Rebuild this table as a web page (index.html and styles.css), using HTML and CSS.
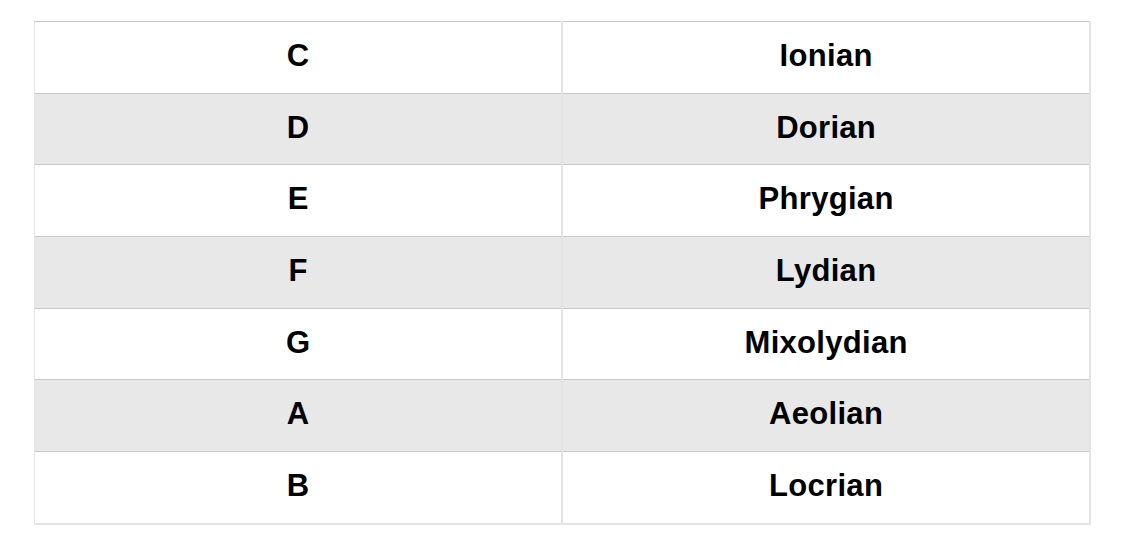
FILE: index.html
```html
<!DOCTYPE html>
<html>
<head>
<meta charset="utf-8">
<link rel="stylesheet" href="styles.css">
</head>
<body>
<div class="wrap">
<table class="modes">
<tbody>
<tr><td>C</td><td>Ionian</td></tr>
<tr><td>D</td><td>Dorian</td></tr>
<tr><td>E</td><td>Phrygian</td></tr>
<tr><td>F</td><td>Lydian</td></tr>
<tr><td>G</td><td>Mixolydian</td></tr>
<tr><td>A</td><td>Aeolian</td></tr>
<tr><td>B</td><td>Locrian</td></tr>
</tbody>
</table>
</div>
</body>
</html>
```
FILE: styles.css
```css
html, body {
  margin: 0;
  padding: 0;
  background: #ffffff;
}
.wrap {
  padding: 21px 33px 0 34px;
}
.modes {
  width: 1057px;
  border-collapse: collapse;
  font-family: "Liberation Sans", Arial, sans-serif;
  font-weight: bold;
  font-size: 31px;
  letter-spacing: 0.3px;
  color: #000;
}
.modes td {
  height: 67.7px;
  padding: 0 0 3px 0;
  text-align: center;
  vertical-align: middle;
  border-left: 2px solid #e4e4e4;
  border-right: 2px solid #e4e4e4;
  border-top: 1px solid #c8c8c8;
  width: 50%;
}
.modes td:first-child {
  border-left-width: 1px;
}
.modes tr:last-child td {
  border-bottom: 2px solid #e4e4e4;
}
.modes tr:nth-child(even) td {
  background: #e8e8e8;
}
```
